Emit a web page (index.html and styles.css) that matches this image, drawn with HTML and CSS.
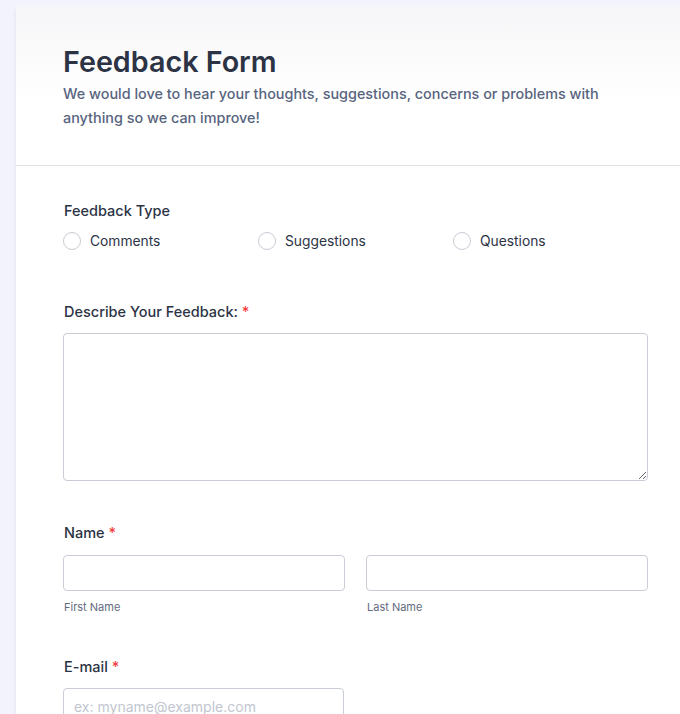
FILE: index.html
```html
<!DOCTYPE html>
<html lang="en">
<head>
<meta charset="utf-8">
<title>Feedback Form</title>
<link rel="stylesheet" href="styles.css">
</head>
<body>
<div class="page">
  <form class="card">
    <header class="header">
      <h1 class="title">Feedback Form</h1>
      <p class="subtitle">We would love to hear your thoughts, suggestions, concerns or problems with anything so we can improve!</p>
    </header>
    <div class="body">
      <div class="field field-first">
        <div class="label">Feedback Type</div>
        <div class="radios">
          <label class="radio"><span class="circle"></span><span>Comments</span></label>
          <label class="radio"><span class="circle"></span><span>Suggestions</span></label>
          <label class="radio"><span class="circle"></span><span>Questions</span></label>
        </div>
      </div>
      <div class="field field-describe">
        <div class="label">Describe Your Feedback: <span class="req">*</span></div>
        <textarea class="textarea"></textarea>
      </div>
      <div class="field field-name">
        <div class="label">Name <span class="req">*</span></div>
        <div class="name-row">
          <div class="name-col">
            <input class="input" type="text">
            <div class="sublabel">First Name</div>
          </div>
          <div class="name-col">
            <input class="input" type="text">
            <div class="sublabel">Last Name</div>
          </div>
        </div>
      </div>
      <div class="field field-email">
        <div class="label">E-mail <span class="req">*</span></div>
        <input class="input email" type="text" placeholder="ex: myname@example.com">
      </div>
    </div>
  </form>
</div>
</body>
</html>
```
FILE: styles.css
```css
html, body {
  margin: 0;
  padding: 0;
  overflow: hidden;
  background: #f3f3fe;
  font-family: Inter, "Noto Sans", sans-serif;
}

.page {
  padding: 5px 0 0 16px;
}

.card {
  width: 700px;
  min-height: 760px;
  background: #fff;
  box-shadow: 0 4px 4px rgba(87, 100, 126, 0.12);
  border-radius: 3px 0 0 0;
}

.header {
  padding: 39px 47px 35px;
  background: linear-gradient(180deg, #f6f6f8 0%, #ffffff 60%);
  border-bottom: 1px solid #dfe1e6;
}

.title {
  margin: 0;
  font-size: 28.7px;
  line-height: 36px;
  font-weight: 600;
  color: #2c3345;
}

.subtitle {
  margin: 2px 0 0;
  width: 560px;
  font-size: 14.4px;
  line-height: 24px;
  font-weight: 500;
  color: #57647e;
}

.body {
  padding: 0 47px 0 48px;
}

.field {
  margin-top: 43px;
}

.field.field-first {
  margin-top: 35px;
}

.field.field-describe {
  margin-top: 52px;
}

.field.field-name {
  margin-top: 42px;
}

.field.field-email {
  margin-top: 43px;
}

.label {
  font-size: 14.5px;
  line-height: 20px;
  font-weight: 500;
  color: #2c3345;
}

.req {
  color: #f23a3c;
}

.radios {
  display: flex;
  margin-top: 11px;
  margin-left: -1px;
}

.radio {
  width: 195px;
  display: flex;
  align-items: center;
  gap: 9px;
  font-size: 13.8px;
  line-height: 18px;
  color: #2c3345;
}

.circle {
  width: 18px;
  height: 18px;
  box-sizing: border-box;
  border: 1.5px solid #c8ccd4;
  border-radius: 50%;
  flex: none;
}

.textarea {
  display: block;
  margin-top: 11px;
  margin-left: -1px;
  width: 585px;
  height: 148px;
  box-sizing: border-box;
  border: 1px solid #c9cdd5;
  border-radius: 4px;
  font-family: inherit;
}

.name-row {
  display: flex;
  gap: 21px;
  margin-top: 12px;
  margin-left: -1px;
  width: 585px;
}

.name-col {
  flex: 1;
}

.name-col .sublabel {
  margin-left: 1px;
}

.input {
  display: block;
  width: 100%;
  height: 36px;
  box-sizing: border-box;
  border: 1px solid #c9cdd5;
  border-radius: 4px;
  padding: 0 10px;
  font-family: inherit;
  font-size: 14px;
  color: #2c3345;
}

.input::placeholder {
  color: #c1c6d0;
}

.sublabel {
  margin-top: 9px;
  font-size: 11px;
  line-height: 14px;
  color: #626a80;
}

.email {
  margin-top: 11px;
  margin-left: -1px;
  width: 281px;
}
```
